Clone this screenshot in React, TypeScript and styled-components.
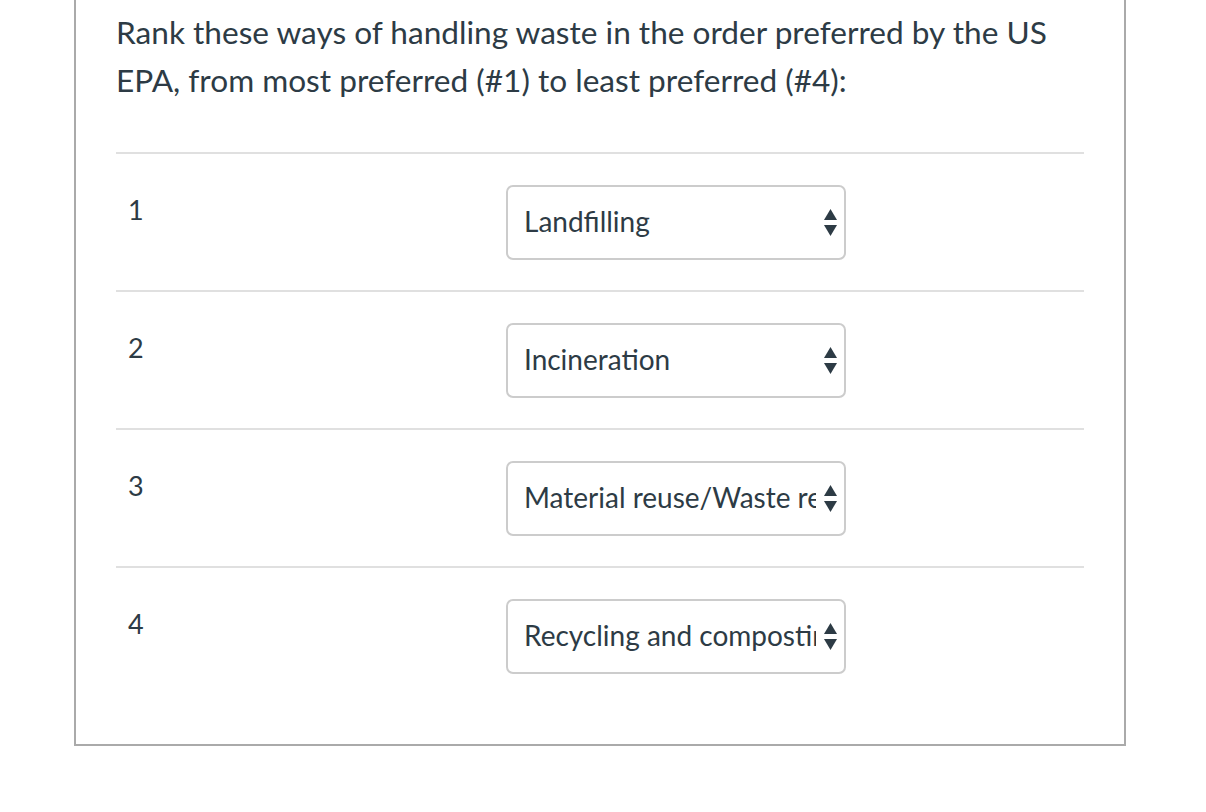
import React from 'react';
import styled, { createGlobalStyle } from 'styled-components';

const GlobalStyle = createGlobalStyle`
  html, body {
    margin: 0;
    padding: 0;
    background: #ffffff;
  }
  body {
    font-family: Lato, "Noto Sans", "Liberation Sans", sans-serif;
    color: #2d3b45;
  }
`;

const OPTIONS = [
  'Landfilling',
  'Incineration',
  'Material reuse/Waste reduction',
  'Recycling and composting',
];

const Page = styled.div`
  padding: 0 80px 66px 74px;
`;

const QuestionBox = styled.div`
  border: 2px solid #aaaaaa;
  border-top: none;
  padding: 8px 40px 40px 40px;
  background: #ffffff;
`;

const Prompt = styled.p`
  margin: 0 0 48px;
  font-size: 31.6px;
  line-height: 48px;
  font-weight: 400;
  color: #2d3b45;
`;

const RankTable = styled.div`
  display: flex;
  flex-direction: column;
`;

const RankRow = styled.div`
  display: grid;
  grid-template-columns: 390px 1fr;
  align-items: start;
  border-top: 2px solid #e0e0e0;
  padding: 31px 0 30px;
`;

const RankNumber = styled.div`
  padding: 5px 0 0 12px;
  font-size: 27px;
  line-height: 39px;
`;

const SelectWrap = styled.div`
  position: relative;
  width: 340px;
`;

const Select = styled.select`
  appearance: none;
  -webkit-appearance: none;
  display: block;
  width: 100%;
  height: 75px;
  box-sizing: border-box;
  border: 2px solid #cccccc;
  border-radius: 7px;
  background: #ffffff;
  padding: 0 28px 4px 16px;
  font-family: Lato, "Noto Sans", "Liberation Sans", sans-serif;
  font-size: 28px;
  color: #2d3b45;
  outline: none;
`;

const Arrows = styled.svg`
  position: absolute;
  right: 9px;
  top: 50%;
  transform: translateY(-50%);
  pointer-events: none;
`;

const SortArrows = () => (
  <Arrows width="13" height="28" viewBox="0 0 13 28" aria-hidden="true">
    <path d="M6.5 0 L13 11 L0 11 Z" fill="#2d3b45" />
    <path d="M0 16 L13 16 L6.5 27 Z" fill="#2d3b45" />
  </Arrows>
);

const ranking = [
  'Landfilling',
  'Incineration',
  'Material reuse/Waste reduction',
  'Recycling and composting',
];

export default function App() {
  return (
    <>
      <GlobalStyle />
      <Page>
        <QuestionBox>
          <Prompt>
            Rank these ways of handling waste in the order preferred by the US EPA, from most
            preferred (#1) to least preferred (#4):
          </Prompt>
          <RankTable>
            {ranking.map((value, i) => (
              <RankRow key={i}>
                <RankNumber>{i + 1}</RankNumber>
                <SelectWrap>
                  <Select defaultValue={value} aria-label={`Rank ${i + 1}`}>
                    {OPTIONS.map((opt) => (
                      <option key={opt} value={opt}>
                        {opt}
                      </option>
                    ))}
                  </Select>
                  <SortArrows />
                </SelectWrap>
              </RankRow>
            ))}
          </RankTable>
        </QuestionBox>
      </Page>
    </>
  );
}
